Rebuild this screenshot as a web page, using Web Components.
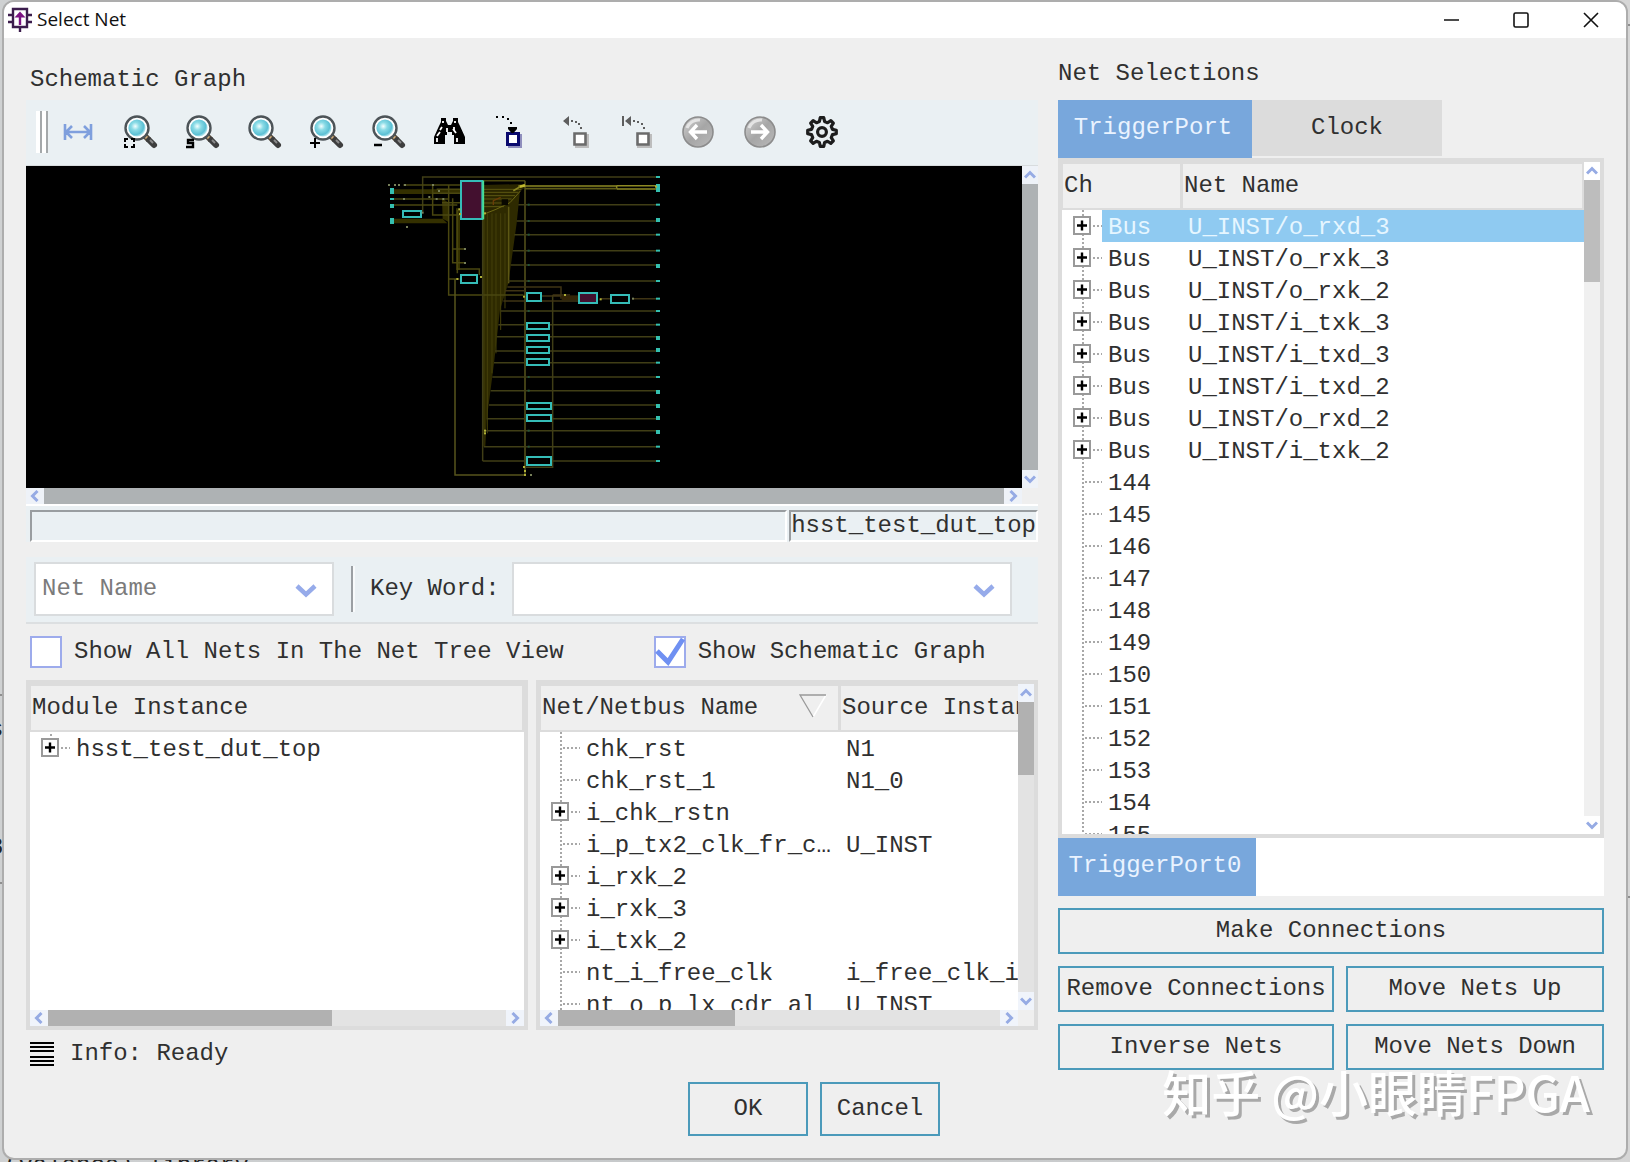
<!DOCTYPE html>
<html lang="en">
<head>
<meta charset="utf-8">
<title>Select Net</title>
<style>
html { height: 100%; }
body {
  margin: 0;
  min-height: 100vh;
  box-sizing: border-box;
  padding: 2px 4px 4px;
  display: flex;
  position: relative;
  overflow: hidden;
  background: linear-gradient(90deg, #cfd1d2 0, #c4c7c9 50%, #d6d6d6 100%);
  font: 24px/28px "Liberation Mono", "Courier New", monospace;
  color: #303030;
}
select-net-window { flex: 1; min-width: 0; z-index: 1; }
</style>
</head>
<body>
<desktop-backdrop></desktop-backdrop>
<select-net-window></select-net-window>

<script>
const define = (name, html, setup) => {
  const template = document.createElement('template');
  template.innerHTML = html;
  customElements.define(name, class extends HTMLElement {
    constructor() {
      super();
      this.attachShadow({ mode: 'open' }).append(template.content.cloneNode(true));
    }
    connectedCallback() { if (setup) setup(this, this.shadowRoot); }
  });
};

/* ---------- icons, all on a 32 x 32 grid ---------- */
const lens = mark => `
  <defs><radialGradient id="g" cx=".4" cy=".4" r=".65"><stop offset="0" stop-color="#f4ffff"/><stop offset=".35" stop-color="#8adbe6"/><stop offset=".75" stop-color="#5cc0d4"/><stop offset="1" stop-color="#d9f6fa"/></radialGradient></defs>
  <path d="M21 20L25 24" stroke="#55493a" stroke-width="6"/>
  <path d="M21 20L26 25" stroke="#d8b27c" stroke-width="3"/>
  <path d="M25 24L30 29" stroke="#3e3e3e" stroke-width="6" stroke-linecap="round"/>
  <path d="M26 24L29 27" stroke="#8b8b8b" stroke-width="2"/>
  <circle cx="13" cy="12" r="11.5" fill="#fff" stroke="#4d5458" stroke-width="2.4"/>
  <circle cx="13" cy="12" r="8.6" fill="url(#g)"/>${mark}`;
const gearPath = () => {
  const pts = [];
  for (let i = 0; i < 8; i++) {
    for (const [o, r] of [[-14, 10.8], [-7, 14.4], [7, 14.4], [14, 10.8]]) {
      const a = (i * 45 + o) * Math.PI / 180;
      pts.push((16 + r * Math.sin(a)).toFixed(2) + ' ' + (16 - r * Math.cos(a)).toFixed(2));
    }
  }
  return 'M' + pts.join('L') + 'Z';
};
const disc = arrow => `
  <defs><linearGradient id="d" x1="0" y1="0" x2="1" y2="1"><stop offset="0" stop-color="#d2d2d2"/><stop offset=".5" stop-color="#a6a6a6"/><stop offset="1" stop-color="#b9b9b9"/></linearGradient></defs>
  <circle cx="16" cy="16" r="15" fill="url(#d)" stroke="#8c8c8c" stroke-width="1.6"/>
  <path d="M5 12A12 12 0 0 1 18 4" fill="none" stroke="#e4e4e4" stroke-width="3"/>
  <path d="${arrow}" fill="none" stroke="#fff" stroke-width="3.4"/>`;
const ICONS = {
  fit: `<path d="M3 8V24M29 8V24M4 16H28M10 10L4 16L10 22M22 10L28 16L22 22" fill="none" stroke="#7f9fdd" stroke-width="2.6"/>`,
  area: lens('<path d="M1 26V23H4M7 23H10V26M10 28V31H7M4 31H1V28" fill="none" stroke="#000" stroke-width="2"/>'),
  selected: lens('<path d="M8 24H2V27H7V31H0" fill="none" stroke="#000" stroke-width="2.4"/>'),
  zoom: lens(''),
  zoomin: lens('<path d="M0 27H10M5 22V32" stroke="#000" stroke-width="2"/>'),
  zoomout: lens('<path d="M2 29H10" stroke="#000" stroke-width="2.4"/>'),
  find: `<path d="M7 2H12V5L14 9H17L19 5V2H24V6L26 10L31 21V28H20V19H18V16H13V19H11V28H0V21L5 10L7 6Z" fill="#000"/>
    <path d="M9 5V7M21 5V7M8 11L6 14M6 16L3 20M3 22V26M23 22V26M13 12V16M20 11V14M19 13L22 17" stroke="#fff" stroke-width="1.8"/>`,
  drive: `<path d="M12 18H26V32H12Z" fill="#8f8fbd"/><path d="M11.5 17.500H22.500V28.500H11.500Z" fill="#fff" stroke="#0a0a6e" stroke-width="3"/>
    <path d="M0 0H2V2H0ZM6 0H8V2H6ZM11 2H13V4H11ZM14 6H16V8H14ZM12 11H21V13L17.500 17H15.500L12 13Z" fill="#000"/>`,
  back1: `<path d="M17 18H31V32H17Z" fill="#bdbdbd"/><path d="M16.500 17.500H27.500V28.500H16.500Z" fill="#fff" stroke="#6b6b6b" stroke-width="2.600"/>
    <path d="M5 5L11 0V10ZM13 4H15V6H13ZM17 5H19V7H17ZM20 7H22V9H20ZM22 11H24V13H22Z" fill="#5e5e5e"/>`,
  back2: `<path d="M17 18H32V32H17Z" fill="#bdbdbd"/><path d="M17.500 17.500H28.500V28.500H17.500Z" fill="#fff" stroke="#6b6b6b" stroke-width="2.600"/>
    <path d="M2 0H4V10H2ZM5 5L11 0V10ZM13 4H15V6H13ZM17 5H19V7H17ZM21 7H23V9H21ZM23 11H25V13H23Z" fill="#5e5e5e"/>`,
  prev: disc('M25 16H9M15 9L8.500 16L15 23'),
  next: disc('M7 16H23M17 9L23.500 16L17 23'),
  settings: `<path d="${gearPath()}" fill="none" stroke="#1d1d1d" stroke-width="3.200" stroke-linejoin="round"/><circle cx="16" cy="16" r="4.400" fill="none" stroke="#1d1d1d" stroke-width="3.200"/>`
};

/* ---------- what shows around the window ---------- */
define('desktop-backdrop', `
<style>
:host { position: absolute; inset: 0; overflow: hidden; color: #222; }
span { position: absolute; white-space: pre; }
i { position: absolute; height: 2px; width: 5px; background: #8f8f8f; }
</style>
<i style="left:0;top:694px"></i><i style="left:0;top:882px"></i>
<i style="right:0;top:24px"></i><i style="right:0;top:896px"></i>
<span style="left:-11px;top:716px">s</span>
<span style="left:-11px;top:834px">8</span>
<span style="left:4px;bottom:-18px">(valence) library</span>`);

/* ---------- toolbar button ---------- */
define('icon-button', `
<style>
:host { display: block; flex: none; }
button { display: block; width: 32px; height: 32px; padding: 0; border: 0; background: none; }
svg { display: block; width: 32px; height: 32px; overflow: visible; }
</style>
<button type="button"><svg viewBox="0 0 32 32"></svg></button>`,
(host, root) => {
  root.querySelector('svg').innerHTML = ICONS[host.getAttribute('icon')];
  root.querySelector('button').setAttribute('aria-label', host.getAttribute('label'));
});

/* ---------- scroll bar ---------- */
define('scroll-bar', `
<style>
:host { display: flex; width: 16px; flex-direction: column; background: var(--track, #e3e3e3); }
:host([horizontal]) { width: auto; height: 16px; flex-direction: row; }
button { flex: none; width: 16px; height: 18px; padding: 0; border: 0; background: var(--arrow-back, #f0f4fb); display: grid; place-items: center; }
:host([horizontal]) button { width: 18px; height: 16px; }
svg { width: 12px; height: 12px; }
:host([horizontal]) svg { transform: rotate(-90deg); }
path { fill: none; stroke: #96abe4; stroke-width: 3; }
.thumb { background: var(--thumb, #b1b1b1); }
</style>
<button type="button" aria-label="Back"><svg viewBox="0 0 12 12"><path d="M1 8.500L6 3.500L11 8.500"/></svg></button>
<div class="thumb"></div><div class="rest"></div>
<button type="button" aria-label="Forward"><svg viewBox="0 0 12 12"><path d="M1 3.500L6 8.500L11 3.500"/></svg></button>`,
(host, root) => {
  const size = +host.getAttribute('thumb');
  root.querySelector('.thumb').style.flex = size + ' 0 0';
  root.querySelector('.rest').style.flex = (100 - size) + ' 0 0';
});

/* ---------- schematic drawing ---------- */
const schematic = () => {
  const line = (d, c = '#403e16', w = 4.5) => `<path d="${d}" stroke="${c}" stroke-width="${w}" fill="none"/>`;
  const box = (x, y, w, h, f = '#000') => `<rect x="${x + 3}" y="${y + 3}" width="${w - 6}" height="${h - 6}" fill="${f}" stroke="#35bdb8" stroke-width="6"/>`;
  const port = (x, y, h) => `<rect x="${x - 6}" y="${y - h / 2}" width="12" height="${h}" fill="#35c0b0"/>`;
  const dot = (x, y, c = '#8a8f4a') => `<rect x="${x - 3}" y="${y - 3}" width="6" height="6" fill="${c}"/>`;
  let s = '';
  s += '<path d="M338 160L420 130L450 92L440 190L415 370L390 450L372 610L350 780L346 860H340Z" fill="#2e2a00"/>';
  s += '<path d="M72 88H270V102H72ZM72 176H218L232 190H72ZM216 115L236 128V186L218 176ZM258 145H270V330H258Z" fill="#343000"/>';
  s += '<path d="M338 75L465 72V84L450 92L420 130L340 165Z" fill="#2a2600"/>';
  for (const x of [342, 352, 366, 378, 392, 405]) s += line(`M${x} 160V${x < 360 ? 820 : 640 - (x - 366) * 5}`, '#45400a', 3);
  for (const y of [88, 97, 107, 117, 129, 140]) s += line(`M340 ${y}H${452 - (y - 90)}`, '#5c5712', 3);
  s += line('M340 163L378 148L420 128L452 92', '#6e6914', 3);
  s += '<path d="M395 118H414V136H395Z" fill="#090800"/><path d="M370 135V122L392 112" fill="none" stroke="#6b3c08" stroke-width="4"/>';
  s += line('M416 140V370', '#5c5714');
  s += line('M158 155V51H860');
  s += line('M100 75H270M72 117H236M72 135H262M188 75V165H270M236 75V405H460M248 115V308H285M248 267H285M262 150V340M262 327H328V345M235 357H268M272 62H465M200 88H270M188 100H270M216 128H270', '#4a4710');
  s += line('M255 357V945H465M465 62V945', '#57541c');
  s += line('M338 170V903M548 405V922H465');
  s += line('M445 78H740M740 77H858M740 87H858M740 77V87', '#8d8923');
  s += line('M465 86H740', '#5d5a17', 5);
  s += line('M430 92L450 80L465 75', '#8a8520', 5) + line('M450 80L465 76', '#c0b930', 8);
  const rows = [[134,445],[183,440],[224,433],[272,428],[315,422],[363,415],[453,392],[494,385],[530,380],[573,375],[608,372],[651,367],[692,362],[735,357],[776,350],[812,345],[860,342],[903,338]];
  for (const [y, x] of rows) s += line(`M${x} ${y}H860`) + dot(476, y, '#24543a');
  s += line('M412 381H573V416M405 392H465M400 423H625M516 408H575M548 405H600M690 416H720M790 416H860', '#3f3414');
  s += '<path d="M575 406H624V420H575Z" fill="#332407"/>';
  s += box(270, 60, 70, 120, '#43102f') + '<path d="M340 62V178" stroke="#48e090" stroke-width="5"/>';
  s += box(96, 150, 60, 24) + box(270, 342, 54, 30) + box(468, 396, 48, 30) + box(624, 396, 60, 36, '#43102f') + box(720, 402, 60, 30);
  for (const y of [486, 522, 558, 594]) s += box(468, y, 72, 24);
  s += box(468, 726, 78, 24) + box(468, 762, 78, 24) + box(468, 888, 78, 30);
  s += port(66, 93, 18) + port(66, 117, 6) + port(66, 138, 12) + port(66, 183, 18);
  for (const y of [51, 134, 224, 272, 363, 416, 453, 494, 608, 651, 860, 903]) s += port(864, y, 6);
  for (const y of [180, 318, 534, 570, 696, 738, 774, 816]) s += port(864, y, 12);
  s += port(864, 84, 24);
  for (const [x, y] of [[57,75],[75,75],[87,75],[105,75],[102,117],[111,201],[189,75],[207,93],[178,111],[200,117],[220,117],[285,267],[285,309],[158,158],[483,945],[789,416]]) s += dot(x, y, '#77805a');
  for (const [x, y] of [[345,160],[262,357],[333,351],[462,410],[585,405],[692,418],[345,812],[345,820],[462,921],[465,933],[465,945],[858,80],[268,148],[270,162]]) s += dot(x, y, '#b0b038');
  return s;
};
define('schematic-view', `
<style>
:host { display: grid; grid-template-columns: minmax(0, 1fr) 16px; grid-template-rows: auto 16px; border-bottom: 2px solid #fff; background: #efefef;
  --track: #aeb2b4; --thumb: #aeb2b4; --arrow-back: #eef2f8; }
.canvas { background: #000; height: 322px; overflow: hidden; }
svg { display: block; height: 322px; width: 996px; }
</style>
<div class="canvas"><svg viewBox="0 0 996 322" role="img" aria-label="Schematic of hsst_test_dut_top"><g transform="translate(344 -6) scale(.33333)"></g></svg></div>
<scroll-bar thumb="100"></scroll-bar>
<scroll-bar horizontal thumb="100"></scroll-bar>`,
(host, root) => { root.querySelector('g').innerHTML = schematic(); });

/* ---------- drop-down ---------- */
define('combo-box', `
<style>
:host { display: grid; height: 54px; }
select, svg { grid-area: 1 / 1; }
select { appearance: none; width: 100%; height: 54px; box-sizing: border-box; margin: 0; padding: 0 50px 0 6px; border: 2px solid #d9dcde; border-radius: 0; background: #fff; font: inherit; color: #7b7b7b; }
svg { width: 22px; height: 16px; justify-self: end; align-self: center; margin-right: 17px; margin-top: 4px; pointer-events: none; }
</style>
<select></select>
<svg viewBox="0 0 22 16"><path d="M2 3L11 11.500L20 3" fill="none" stroke="#96abea" stroke-width="4.500"/></svg>`,
(host, root) => {
  const s = root.querySelector('select');
  s.setAttribute('aria-label', host.getAttribute('label'));
  s.add(new Option(host.getAttribute('value') || ''));
});

/* ---------- tick box ---------- */
define('check-field', `
<style>
:host { display: block; }
label { display: flex; align-items: center; gap: 12px; white-space: nowrap; }
.box { display: grid; flex: none; }
input, svg { grid-area: 1 / 1; width: 32px; height: 32px; margin: 0; }
input { appearance: none; box-sizing: border-box; border: 2px solid #9dabec; background: #fff; }
svg { pointer-events: none; visibility: hidden; }
input:checked + svg { visibility: visible; }
</style>
<label><span class="box"><input type="checkbox"><svg viewBox="0 0 32 32"><path d="M3 15L14 26L29 3" fill="none" stroke="#6f90f2" stroke-width="5"/></svg></span><span><slot></slot></span></label>`,
(host, root) => { root.querySelector('input').checked = host.hasAttribute('checked'); });

/* ---------- outlined push button ---------- */
define('push-button', `
<style>
:host { display: block; min-width: 0; }
button { display: block; width: 100%; height: var(--button-height, 46px); box-sizing: border-box; margin: 0; padding: 0; border: 2px solid #4b9aba; background: #efefef; font: inherit; color: inherit; white-space: nowrap; }
</style>
<button type="button"><slot></slot></button>`);

/* ---------- tabs ---------- */
define('tab-button', `
<style>
:host { display: block; }
button { display: block; width: 100%; height: 56px; margin: 0; padding: 0 16px; border: 0; background: #dcdcdc; font: inherit; color: inherit; }
:host([active]) button { height: 58px; padding: 0 14px 2px 10px; background: #78a7dc; color: #eaf3ff; }
</style>
<button type="button" role="tab"><slot></slot></button>`,
(host, root) => root.querySelector('button').setAttribute('aria-selected', host.hasAttribute('active')));

/* ---------- tree with columns ---------- */
const twig = (open, root) => {
  const dots = 'fill="none" stroke="#8c8c8c" stroke-width="1.500" stroke-dasharray="2 2"';
  return `<svg viewBox="0 0 40 32"><path d="${root ? 'M21 2V8' : 'M21 0V32'}M23 16H40" ${dots}/>${open
    ? '<path d="M12 7H28V24H12Z" fill="#fff" stroke="#999" stroke-width="2"/><path d="M15 15.500H25M20 10.500V20.500" stroke="#000" stroke-width="2.400"/>' : ''}</svg>`;
};
define('tree-table', `
<style>
:host { display: grid; grid-template-columns: minmax(0, 1fr) auto; grid-template-rows: minmax(0, 1fr) auto; box-sizing: border-box; min-height: 0; min-width: 0; border: 4px solid #dcdcdc; background: #efefef; }
.view { grid-area: 1 / 1; overflow: hidden; background: #fff; height: 0; min-height: 100%; }
::slotted([slot=vertical]) { grid-area: 1 / 2; }
::slotted([slot=horizontal]) { grid-area: 2 / 1; }
table { width: 100%; table-layout: fixed; border-collapse: separate; border-spacing: 0; }
th { height: 44px; padding: 0 0 0 1px; border: solid #dcdcdc; border-width: 2px 2px 2px 1px; background: #efefef; font-weight: normal; text-align: left; white-space: nowrap; overflow: hidden; }
.head { display: flex; align-items: center; justify-content: space-between; height: 44px; }
.head svg { width: 28px; height: 24px; margin-right: 11px; margin-bottom: 4px; flex: none; }
td { height: 28px; padding: 4px 0 0 6px; white-space: pre; overflow: hidden; vertical-align: top; }
td:first-child { padding: 0; height: 32px; }
.cell { display: flex; height: 32px; }
.cell > button, .cell > .twig { flex: none; width: 40px; height: 32px; padding: 0; border: 0; background: #fff; }
.cell svg { display: block; width: 40px; height: 32px; }
.text { padding: 4px 0 0 6px; flex: 1; }
tr.selected td { background: #8fcaf1; color: #e6f6ff; }
</style>
<div class="view"><table><colgroup></colgroup><thead><tr></tr></thead><tbody></tbody></table></div>
<slot name="vertical"></slot><slot name="horizontal"></slot>`,
(host, root) => {
  const data = TREES[host.getAttribute('source')];
  if (data.width) root.querySelector('table').style.width = data.width;
  root.querySelector('colgroup').innerHTML = data.columns.map(c => `<col${c.width ? ` style="width:${c.width}px"` : ''}>`).join('');
  root.querySelector('thead tr').innerHTML = data.columns.map(c => `<th scope="col"><div class="head"><span>${c.title}</span>${c.sorted
    ? '<svg viewBox="0 0 28 24"><path d="M14 23L27 1" stroke="#fff" stroke-width="1.500"/><path d="M27 1H1L14 23" fill="none" stroke="#999" stroke-width="1.300"/></svg>' : ''}</div></th>`).join('');
  root.querySelector('tbody').innerHTML = data.rows.map(([open, ...cells], i) => `<tr${data.selected === i ? ' class="selected"' : ''}>${cells.map((t, c) =>
    c ? `<td>${t}</td>` : `<td><div class="cell">${open ? `<button type="button" aria-label="Expand">${twig(true, data.root)}</button>` : `<span class="twig">${twig(false)}</span>`}<span class="text">${t}</span></div></td>`).join('')}</tr>`).join('');
});
const numbers = Array.from({ length: 12 }, (_, i) => [0, String(144 + i), '']);
const TREES = {
  modules: { root: true, columns: [{ title: 'Module Instance' }], rows: [[1, 'hsst_test_dut_top']] },
  nets: {
    width: '250%',
    columns: [{ title: 'Net/Netbus Name', width: 300, sorted: true }, { title: 'Source Instance' }],
    rows: [[0, 'chk_rst', 'N1'], [0, 'chk_rst_1', 'N1_0'], [1, 'i_chk_rstn', ''], [0, 'i_p_tx2_clk_fr_c…', 'U_INST'], [1, 'i_rxk_2', ''],
      [1, 'i_rxk_3', ''], [1, 'i_txk_2', ''], [0, 'nt_i_free_clk', 'i_free_clk_i'], [0, 'nt_o_p_lx_cdr_al', 'U_INST']]
  },
  channels: {
    selected: 0,
    columns: [{ title: 'Ch', width: 120 }, { title: 'Net Name' }],
    rows: ['o_rxd_3', 'o_rxk_3', 'o_rxk_2', 'i_txk_3', 'i_txd_3', 'i_txd_2', 'o_rxd_2', 'i_txk_2'].map(n => [1, 'Bus', 'U_INST/' + n]).concat(numbers)
  }
};

/* ---------- left side ---------- */
define('graph-panel', `
<style>
:host { display: flex; flex-direction: column; min-width: 0; }
h2 { margin: 28px 0 6px 4px; font: inherit; }
.tools { display: flex; align-items: center; gap: 30px; height: 63px; padding: 0 0 2px 10px; background: #eaf0f3; border-bottom: 1px solid #d8dcde; }
.grip { flex: none; width: 12px; height: 42px; margin-right: -16px; background: linear-gradient(90deg, #fff 0 4px, #a4a8aa 4px 6px, #fff 6px 10px, #a4a8aa 10px 12px); }
.status { display: flex; gap: 2px; padding: 4px 0 0 4px; background: #eaf0f3; }
.status span { height: 28px; border: solid; border-width: 2px; border-color: #999da0 #fff #fff #999da0; }
.status span:first-child { flex: 1; }
.search { display: flex; align-items: center; padding: 5px 26px 6px 8px; margin-top: 15px; background: #eaf0f3; border-bottom: 2px solid #dcdfe1; white-space: nowrap; }
.search combo-box:first-child { width: 300px; flex: none; }
.rule { width: 2px; height: 46px; margin: 0 17px; background: #9b9fa3; box-shadow: 2px 0 #f8fafb; }
.search label { margin-right: 12px; }
.search combo-box:last-child { flex: 1; }
.checks { display: flex; gap: 90px; padding: 12px 4px; }
.trees { flex: 1; min-height: 0; display: grid; grid-template-columns: minmax(0, 1fr) minmax(0, 1fr); gap: 8px; }
.info { display: flex; align-items: center; gap: 16px; height: 24px; padding: 12px 4px 4px; }
.info svg { width: 24px; height: 24px; }
</style>
<h2>Schematic Graph</h2>
<div class="tools" role="toolbar"><span class="grip"></span>
<icon-button icon="fit" label="Fit width"></icon-button><icon-button icon="area" label="Zoom area"></icon-button><icon-button icon="selected" label="Zoom selected"></icon-button><icon-button icon="zoom" label="Zoom full"></icon-button><icon-button icon="zoomin" label="Zoom in"></icon-button><icon-button icon="zoomout" label="Zoom out"></icon-button><icon-button icon="find" label="Find"></icon-button><icon-button icon="drive" label="Push into"></icon-button><icon-button icon="back1" label="Pop"></icon-button><icon-button icon="back2" label="Pop to top"></icon-button><icon-button icon="prev" label="Previous"></icon-button><icon-button icon="next" label="Next"></icon-button><icon-button icon="settings" label="Settings"></icon-button></div>
<schematic-view></schematic-view>
<div class="status"><span></span><span>hsst_test_dut_top</span></div>
<div class="search"><combo-box label="Search by" value="Net Name"></combo-box><span class="rule"></span><label>Key Word:</label><combo-box label="Key Word"></combo-box></div>
<div class="checks"><check-field>Show All Nets In The Net Tree View</check-field><check-field checked>Show Schematic Graph</check-field></div>
<div class="trees">
<tree-table source="modules"><scroll-bar slot="horizontal" horizontal thumb="62"></scroll-bar></tree-table>
<tree-table source="nets"><scroll-bar slot="vertical" thumb="25"></scroll-bar><scroll-bar slot="horizontal" horizontal thumb="40"></scroll-bar></tree-table>
</div>
<div class="info"><svg viewBox="0 0 24 24"><path d="M0 1H24M0 5H24M0 9H24M0 15H24M0 19H24M0 23H24" stroke="#000" stroke-width="2"/></svg><span>Info: Ready</span></div>`,
(host, root) => {
  root.querySelector('.search label').onclick = () => root.querySelector('.search combo-box:last-child').shadowRoot.querySelector('select').focus();
});

/* ---------- right side ---------- */
define('selection-panel', `
<style>
:host { display: flex; flex-direction: column; min-width: 0; }
h2 { margin: 22px 0 12px; font: inherit; }
.tabs { display: flex; height: 58px; }
.tabs tab-button:first-child { width: 194px; }
.tabs tab-button:last-child { width: 190px; }
tree-table { flex: 1; --track: #f0f0f0; --thumb: #bdbdbd; --arrow-back: #fff; }
.ports { display: flex; background: #fff; height: 58px; }
.ports tab-button { width: 198px; }
.buttons { display: grid; grid-template-columns: 276px minmax(0, 1fr); gap: 12px; padding-top: 12px; }
.wide { grid-column: 1 / 3; }
</style>
<h2>Net Selections</h2>
<div class="tabs" role="tablist"><tab-button active>TriggerPort</tab-button><tab-button>Clock</tab-button></div>
<tree-table source="channels"><scroll-bar slot="vertical" thumb="16"></scroll-bar></tree-table>
<div class="ports" role="tablist"><tab-button active>TriggerPort0</tab-button></div>
<div class="buttons"><push-button class="wide">Make Connections</push-button><push-button>Remove Connections</push-button><push-button>Move Nets Up</push-button><push-button>Inverse Nets</push-button><push-button>Move Nets Down</push-button></div>`);

/* ---------- the dialog ---------- */
define('select-net-window', `
<style>
:host { display: flex; flex-direction: column; position: relative; border-radius: 10px; background: #efefef; box-shadow: 0 0 0 2px #adadad; overflow: hidden; }
header { display: flex; align-items: center; height: 36px; padding: 0 23px 0 4px; background: #fff; color: #111; font: 19px/28px "Open Sans", "Noto Sans", sans-serif; }
header .logo { width: 24px; height: 26px; margin-right: 5px; }
header h1 { flex: 1; margin: 0; padding-bottom: 2px; font: inherit; }
header .controls { display: flex; gap: 46px; padding-bottom: 1px; }
header button { width: 24px; height: 24px; padding: 0; border: 0; background: none; }
header button svg { display: block; width: 24px; height: 24px; fill: none; stroke: #111; stroke-width: 1.600; }
main { flex: 1; display: grid; grid-template-columns: minmax(0, 1fr) 546px; gap: 20px; padding: 0 22px; }
footer { display: flex; justify-content: center; gap: 12px; padding: 12px 2px 22px 0; --button-height: 54px; }
footer push-button { width: 120px; }
.mark { position: absolute; right: 36px; bottom: 32px; font: 500 49px/70px "Noto Sans CJK SC", sans-serif; color: #fff; text-shadow: 3px 3px 0 #a9a9a9; white-space: nowrap; }
</style>
<header>
<svg class="logo" viewBox="0 0 24 26"><path d="M5 2H19V20H5ZM0 8H5M0 15H5M19 8H24M19 15H24M12 20V25" fill="none" stroke="#3c1d4d" stroke-width="2.400"/><path d="M12 18V9" stroke="#7b1382" stroke-width="2.400"/><path d="M6.500 10.500L12 4.500L17.500 10.500Z" fill="#7b1382"/></svg>
<h1>Select Net</h1>
<div class="controls">
<button type="button" aria-label="Minimize"><svg viewBox="0 0 24 24"><path d="M5 12H20"/></svg></button>
<button type="button" aria-label="Maximize"><svg viewBox="0 0 24 24"><rect x="5" y="5" width="14" height="14" rx="1.500"/></svg></button>
<button type="button" aria-label="Close"><svg viewBox="0 0 24 24"><path d="M5 5L19 19M19 5L5 19"/></svg></button>
</div>
</header>
<main><graph-panel></graph-panel><selection-panel></selection-panel></main>
<footer><push-button>OK</push-button><push-button>Cancel</push-button></footer>
<div class="mark">知乎 @小眼睛FPGA</div>`);
</script>
</body>
</html>
